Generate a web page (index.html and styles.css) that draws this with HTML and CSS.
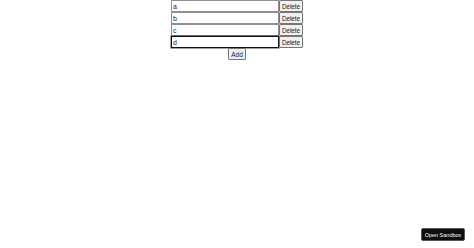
FILE: index.html
```html
<!DOCTYPE html>
<html>
<head>
<meta charset="utf-8">
<link rel="stylesheet" href="styles.css">
</head>
<body>
<div class="app">
  <ul class="list">
    <li class="row"><input class="field" value="a"><button class="btn">Delete</button></li>
    <li class="row"><input class="field" value="b"><button class="btn">Delete</button></li>
    <li class="row"><input class="field" value="c"><button class="btn">Delete</button></li>
    <li class="row"><input class="field focused" value="d"><button class="btn">Delete</button></li>
  </ul>
  <button class="btn add">Add</button>
</div>
<button class="sandbox">Open Sandbox</button>
</body>
</html>
```
FILE: styles.css
```css
html, body {
  margin: 0;
  padding: 0;
  background: #fff;
  font-family: "Liberation Sans", Arial, sans-serif;
}
.app {
  display: flex;
  flex-direction: column;
  align-items: center;
}
.list {
  list-style: none;
  margin: 0;
  padding: 0;
  display: flex;
  flex-direction: column;
}
.row {
  display: flex;
  height: 12px;
}
.field {
  box-sizing: border-box;
  width: 108px;
  height: 12px;
  margin: 0;
  padding: 0 1px;
  border: 1px solid #8f8f8f;
  font-family: "Liberation Sans", Arial, sans-serif;
  font-size: 7px;
  color: #222;
  background: #fff;
  outline: none;
}
.field.focused {
  border: 1px solid #101010;
  box-shadow: 0 0 0 0.5px #444;
}
.btn {
  box-sizing: border-box;
  height: 12px;
  width: 24px;
  margin: 0;
  padding: 0;
  border: 1px solid #767676;
  border-radius: 1px;
  background: #efefef;
  font-family: "Liberation Sans", Arial, sans-serif;
  font-size: 6.3px;
  color: #222;
  text-align: center;
  white-space: nowrap;
}
.add {
  width: 18px;
  height: 12px;
  font-size: 6.5px;
}
.sandbox {
  position: fixed;
  right: 9px;
  bottom: 7px;
  box-sizing: border-box;
  width: 44px;
  height: 13px;
  padding: 0;
  border: 1px solid #555;
  border-radius: 2px;
  background: #0d0d0d;
  color: #fff;
  font-family: "Liberation Sans", Arial, sans-serif;
  font-size: 5.5px;
}
```
